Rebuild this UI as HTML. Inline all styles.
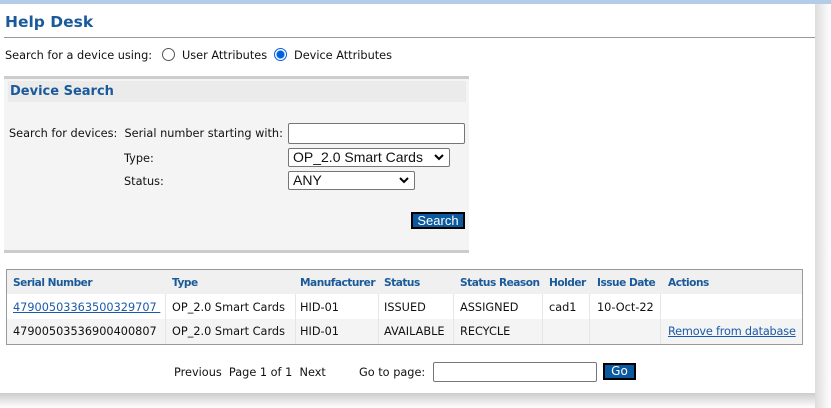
<!DOCTYPE html>
<html><head><style>
*{margin:0;padding:0;box-sizing:border-box}
body{width:831px;height:408px;background:#fff;font-family:"DejaVu Sans","Liberation Sans",sans-serif;font-size:11px;color:#111;position:relative;overflow:hidden}
.a{position:absolute;white-space:nowrap}
.t{font-size:11.3px;letter-spacing:0px}
.h{color:#1a5a9a;font-weight:bold;font-size:10.6px;letter-spacing:-0.5px}
a{color:#1a5aa8;text-decoration:underline}
.sel{position:absolute;background:#fff;border:1px solid #767676;border-radius:2px;font-family:"Liberation Sans",sans-serif;font-size:14px;padding-left:4px;line-height:16px}
.sel svg{position:absolute;right:5px;top:5px}
</style></head><body>
<div class="a" style="left:0;top:0;width:831px;height:4px;background:#b3cde8"></div>
<div class="a" style="left:815px;top:4px;width:16px;height:404px;background:linear-gradient(90deg,#ddd,#fff)"></div>
<div class="a" style="left:0;top:393px;width:815px;height:15px;background:linear-gradient(#ccc,#fff)"></div>
<div class="a" style="left:5px;top:13px;font-size:15.5px;color:#1a5a9a;font-weight:bold">Help Desk</div>
<div class="a" style="left:4px;top:37px;width:811px;height:1px;background:#999"></div>
<div class="a t" style="left:5px;top:49px">Search for a device using:</div>
<div class="a" style="left:162px;top:48px;width:13px;height:13px;border:1px solid #555;border-radius:50%"></div>
<div class="a t" style="left:182px;top:49px">User Attributes</div>
<div class="a" style="left:274px;top:48px;width:13px;height:13px;border:1px solid #0060df;border-radius:50%;background:radial-gradient(#0060df 3.5px,#fff 4.5px)"></div>
<div class="a t" style="left:294px;top:49px">Device Attributes</div>
<div class="a" style="left:4px;top:76px;width:465px;height:177px;background:#f4f4f4;border-top:3px solid #ccc;border-bottom:3px solid #ccc"></div>
<div class="a" style="left:8px;top:81px;width:458px;height:21px;background:#ebebeb"></div>
<div class="a" style="left:10px;top:84px;font-size:13px;color:#1a5a9a;font-weight:bold">Device Search</div>
<div class="a t" style="left:9px;top:127px">Search for devices:&nbsp; Serial number starting with:</div>
<div class="a t" style="left:124px;top:152px">Type:</div>
<div class="a t" style="left:124px;top:175px">Status:</div>
<div class="a" style="left:288px;top:123px;width:177px;height:21px;background:#fff;border:1px solid #767676;border-radius:2px"></div>
<div class="sel" style="left:288px;top:148px;width:162px;height:19px">OP_2.0 Smart Cards<svg width="10" height="7" viewBox="0 0 10 7"><path d="M1 1l4 4 4-4" stroke="#000" stroke-width="2" fill="none"/></svg></div>
<div class="sel" style="left:288px;top:171px;width:127px;height:19px">ANY<svg width="10" height="7" viewBox="0 0 10 7"><path d="M1 1l4 4 4-4" stroke="#000" stroke-width="2" fill="none"/></svg></div>
<div class="a" style="left:411px;top:212px;width:54px;height:17px;background:#0b5aa0;border:2px solid #000;color:#fff;font-family:'Liberation Sans',sans-serif;font-size:13px;text-align:center;line-height:13px">Search</div>
<div class="a" style="left:6px;top:269px;width:797px;height:76px;border:1px solid #999;background:#fff"></div>
<div class="a" style="left:7px;top:270px;width:795px;height:24px;background:#f0f0f0"></div>
<div class="a" style="left:7px;top:319px;width:795px;height:25px;background:#f4f4f4"></div>
<div class="a" style="left:165px;top:294px;width:1px;height:50px;background:#e6e6e6"></div>
<div class="a" style="left:295px;top:294px;width:1px;height:50px;background:#e6e6e6"></div>
<div class="a" style="left:378px;top:294px;width:1px;height:50px;background:#e6e6e6"></div>
<div class="a" style="left:453px;top:294px;width:1px;height:50px;background:#e6e6e6"></div>
<div class="a" style="left:542px;top:294px;width:1px;height:50px;background:#e6e6e6"></div>
<div class="a" style="left:589px;top:294px;width:1px;height:50px;background:#e6e6e6"></div>
<div class="a" style="left:660px;top:294px;width:1px;height:50px;background:#e6e6e6"></div>
<div class="a h" style="left:13px;top:277px">Serial Number</div>
<div class="a h" style="left:172px;top:277px">Type</div>
<div class="a h" style="left:300px;top:277px">Manufacturer</div>
<div class="a h" style="left:384px;top:277px">Status</div>
<div class="a h" style="left:460px;top:277px">Status Reason</div>
<div class="a h" style="left:549px;top:277px">Holder</div>
<div class="a h" style="left:597px;top:277px">Issue Date</div>
<div class="a h" style="left:668px;top:277px">Actions</div>
<div class="a t" style="left:13px;top:301px"><a>47900503363500329707&nbsp;</a></div>
<div class="a t" style="left:172px;top:301px">OP_2.0 Smart Cards</div>
<div class="a t" style="left:300px;top:301px">HID-01</div>
<div class="a t" style="left:384px;top:301px">ISSUED</div>
<div class="a t" style="left:460px;top:301px">ASSIGNED</div>
<div class="a t" style="left:549px;top:301px">cad1</div>
<div class="a t" style="left:597px;top:301px">10-Oct-22</div>
<div class="a t" style="left:13px;top:325px">47900503536900400807</div>
<div class="a t" style="left:172px;top:325px">OP_2.0 Smart Cards</div>
<div class="a t" style="left:300px;top:325px">HID-01</div>
<div class="a t" style="left:384px;top:325px">AVAILABLE</div>
<div class="a t" style="left:460px;top:325px">RECYCLE</div>
<div class="a t" style="left:668px;top:325px;letter-spacing:-0.2px"><a>Remove from database</a></div>
<div class="a t" style="left:174px;top:366px">Previous&nbsp; Page 1 of 1&nbsp; Next</div>
<div class="a t" style="left:359px;top:366px">Go to page:</div>
<div class="a" style="left:433px;top:362px;width:164px;height:20px;border:1px solid #767676;border-radius:2px"></div>
<div class="a" style="left:603px;top:363px;width:33px;height:17px;background:#0b5aa0;border:2px solid #000;color:#fff;font-size:12px;text-align:center;line-height:13px">Go</div>
</body></html>
